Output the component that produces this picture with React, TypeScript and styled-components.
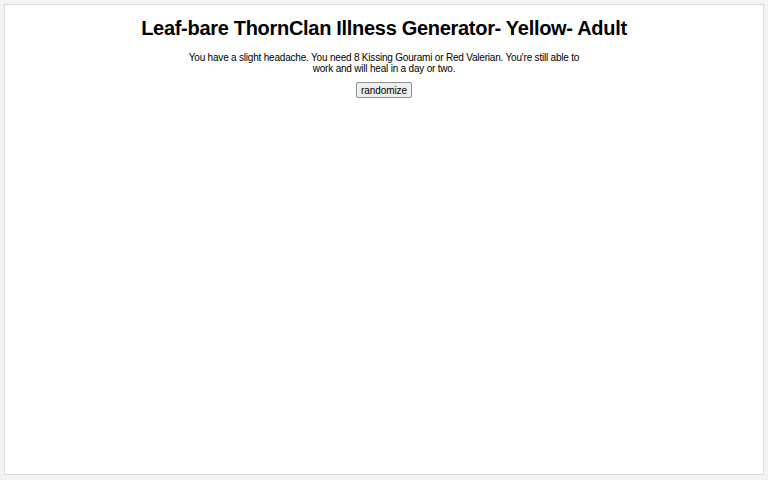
import React from "react";
import styled, { createGlobalStyle } from "styled-components";

const Global = createGlobalStyle`
  html, body { margin: 0; padding: 0; }
  body {
    background: #f3f3f3;
    font-family: "Liberation Sans", Arial, sans-serif;
    color: #000;
  }
`;

const Page = styled.div`
  padding: 4px 4px 5px 4px;
  height: 480px;
  box-sizing: border-box;
  display: flex;
`;

const Panel = styled.main`
  flex: 1;
  background: #fff;
  border: 1px solid #dcdcdc;
  display: flex;
  flex-direction: column;
  align-items: center;
  padding-top: 11px;
`;

const Title = styled.h1`
  margin: 0;
  font-size: 20px;
  letter-spacing: -0.3px;
  font-weight: bold;
  line-height: 24px;
`;

const Result = styled.p`
  margin: 12px 0 0;
  width: 400px;
  font-size: 10px;
  letter-spacing: -0.2px;
  line-height: 11px;
  text-align: center;
`;

const Button = styled.button`
  margin-top: 8px;
  font-family: "Liberation Sans", Arial, sans-serif;
  font-size: 10px;
  letter-spacing: -0.1px;
  line-height: 11px;
  padding: 2px 4px 1px;
  background: #efefef;
  border: 1px solid #8f8f8f;
  border-radius: 2px;
  color: #000;
`;

export default function App() {
  return (
    <>
      <Global />
      <Page>
        <Panel>
          <Title>Leaf-bare ThornClan Illness Generator- Yellow- Adult</Title>
          <Result>
            You have a slight headache. You need 8 Kissing Gourami or Red Valerian. You're still able to work and will heal in a day or two.
          </Result>
          <Button type="button">randomize</Button>
        </Panel>
      </Page>
    </>
  );
}
